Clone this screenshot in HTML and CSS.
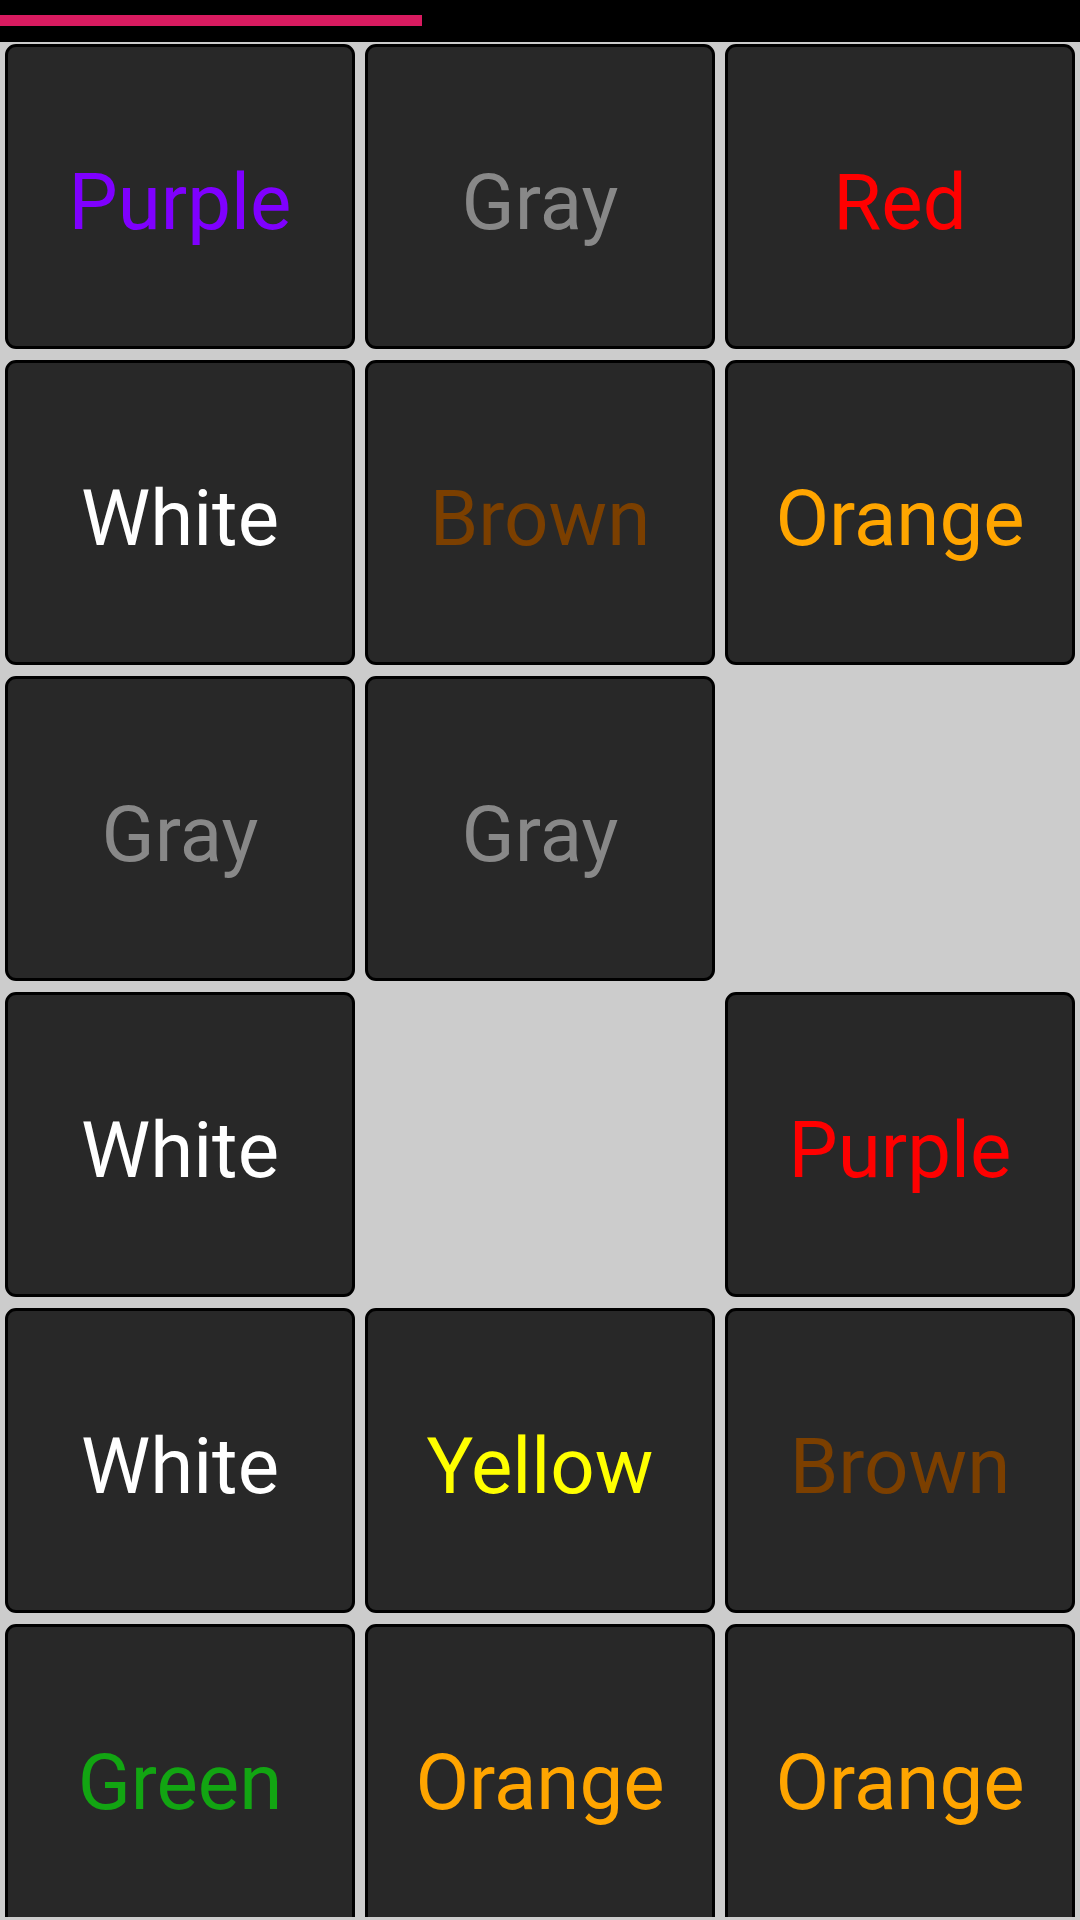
FILE: index.html
```html
<!DOCTYPE html>
<html lang="en">
<head>
<meta charset="utf-8">
<title>Color Words</title>
<link rel="stylesheet" href="styles.css">
</head>
<body>
  <header class="topbar">
    <div class="timer"><div class="timer-fill"></div></div>
  </header>
  <main class="board">
    <div class="grid">
      <div class="tile"><span class="word c-purple">Purple</span></div>
      <div class="tile"><span class="word c-gray">Gray</span></div>
      <div class="tile"><span class="word c-red">Red</span></div>

      <div class="tile"><span class="word c-white">White</span></div>
      <div class="tile"><span class="word c-brown">Brown</span></div>
      <div class="tile"><span class="word c-orange">Orange</span></div>

      <div class="tile"><span class="word c-gray">Gray</span></div>
      <div class="tile"><span class="word c-gray">Gray</span></div>
      <div class="slot"></div>

      <div class="tile"><span class="word c-white">White</span></div>
      <div class="slot"></div>
      <div class="tile"><span class="word c-red">Purple</span></div>

      <div class="tile"><span class="word c-white">White</span></div>
      <div class="tile"><span class="word c-yellow">Yellow</span></div>
      <div class="tile"><span class="word c-brown">Brown</span></div>

      <div class="tile"><span class="word c-green">Green</span></div>
      <div class="tile"><span class="word c-orange">Orange</span></div>
      <div class="tile"><span class="word c-orange">Orange</span></div>
    </div>
  </main>
</body>
</html>
```

FILE: styles.css
```css
html, body {
  margin: 0;
  padding: 0;
}

body {
  width: 1080px;
  height: 1920px;
  overflow: hidden;
  background: #cccccc;
  font-family: Roboto, "Noto Sans", sans-serif;
}

/* top bar with the countdown strip */
.topbar {
  height: 42px;
  background: #000000;
  padding-top: 15px;
  box-sizing: border-box;
}

.timer {
  height: 11px;
}

.timer-fill {
  width: 422px;
  height: 100%;
  background: #d81b60;
}

.board {
  height: 1875px;
  overflow: hidden;
  background: #cccccc;
}

.grid {
  display: grid;
  grid-template-columns: repeat(3, 350px);
  grid-auto-rows: 305px;
  column-gap: 10px;
  row-gap: 11px;
  padding: 2px 5px 0 5px;
}

.tile {
  box-sizing: border-box;
  background: #282828;
  border: 3px solid #000000;
  border-radius: 11px;
  display: flex;
  align-items: center;
  justify-content: center;
}

.word {
  font-size: 78px;
  line-height: 1;
  font-weight: 400;
  padding-top: 12px;
}

.c-purple { color: #7f00ff; }
.c-gray   { color: #888888; }
.c-red    { color: #ff0000; }
.c-white  { color: #ffffff; }
.c-brown  { color: #7b3f00; }
.c-orange { color: #ffa500; }
.c-yellow { color: #ffff00; }
.c-green  { color: #12a512; }
```
